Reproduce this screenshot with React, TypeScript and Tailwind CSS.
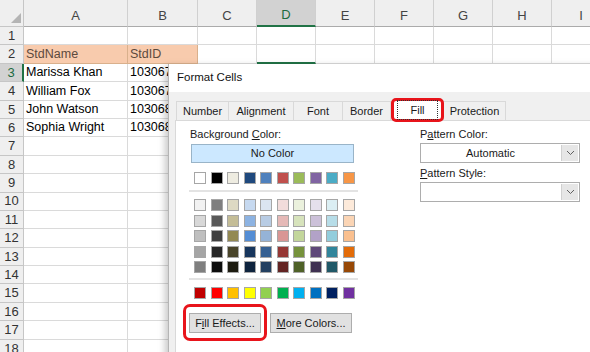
import React from "react";

const cols = [
  { k: "A", w: "w-[104px]" },
  { k: "B", w: "w-[70px]" },
  { k: "C", w: "w-[59px]" },
  { k: "D", w: "w-[59px]" },
  { k: "E", w: "w-[59px]" },
  { k: "F", w: "w-[59px]" },
  { k: "G", w: "w-[59px]" },
  { k: "H", w: "w-[59px]" },
  { k: "I", w: "w-[59px]" },
];

const data: Record<number, string[]> = {
  2: ["StdName", "StdID"],
  3: ["Marissa Khan", "10306712"],
  4: ["William Fox", "10306745"],
  5: ["John Watson", "10306803"],
  6: ["Sophia Wright", "10306867"],
};

const themeTop = ["#FFFFFF", "#000000", "#EEECE1", "#1F497D", "#4F81BD", "#C0504D", "#9BBB59", "#8064A2", "#4BACC6", "#F79646"];

const themeShades = [
  ["#F2F2F2", "#7F7F7F", "#DDD9C3", "#C6D9F0", "#DBE5F1", "#F2DCDB", "#EBF1DD", "#E5E0EC", "#DBEEF3", "#FDEADA"],
  ["#D8D8D8", "#595959", "#C4BD97", "#8DB3E2", "#B8CCE4", "#E5B9B7", "#D7E3BC", "#CCC1D9", "#B7DDE8", "#FBD5B5"],
  ["#BFBFBF", "#3F3F3F", "#938953", "#548DD4", "#95B3D7", "#D99694", "#C3D69B", "#B2A2C7", "#92CDDC", "#FAC08F"],
  ["#A5A5A5", "#262626", "#494429", "#17365D", "#366092", "#953734", "#76923C", "#5F497A", "#31859B", "#E36C09"],
  ["#7F7F7F", "#0C0C0C", "#1D1B10", "#0F243E", "#244061", "#632423", "#4F6128", "#3F3151", "#205867", "#974806"],
];

const standard = ["#C00000", "#FF0000", "#FFC000", "#FFFF00", "#92D050", "#00B050", "#00B0F0", "#0070C0", "#002060", "#7030A0"];

function Sheet() {
  const rows = Array.from({ length: 18 }, (_, i) => i + 1);
  return (
    <div className="flex flex-col">
      {/* column headers */}
      <div className="flex h-[27px] bg-[#efefef]">
        <div className="w-[24px] shrink-0 border-r border-b border-[#c6c6c6] flex items-end justify-end pr-[2px] pb-[3px]">
          <svg width="10" height="10" viewBox="0 0 10 10">
            <polygon points="10,0 10,10 0,10" fill="#b4b4b4" />
          </svg>
        </div>
        {cols.map((c) => (
          <div
            key={c.k}
            className={`${c.w} shrink-0 flex items-center justify-center pt-[5px] border-r border-[#d0d0d0] text-[13px] ${
              c.k === "D"
                ? "bg-[#d2d2d2] text-[#1d6b40] border-b-2 border-b-[#217346]"
                : "text-[#444] border-b border-b-[#ababab]"
            }`}
          >
            {c.k}
          </div>
        ))}
      </div>
      {rows.map((r) => (
        <div key={r} className="flex h-[18.4px]">
          <div
            className={`w-[24px] shrink-0 border-b border-[#c6c6c6] flex items-center justify-center text-[13px] ${
              r === 3
                ? "bg-[#d2d2d2] text-[#1d6b40] border-r-2 border-r-[#217346]"
                : "bg-[#efefef] text-[#333] border-r"
            }`}
          >
            {r}
          </div>
          {cols.map((c, ci) => {
            const text = data[r]?.[ci] ?? "";
            const filled = r === 2 && ci < 2;
            const sel = r === 2 && c.k === "D";
            return (
              <div
                key={c.k}
                className={`${c.w} shrink-0 border-r flex items-center pl-[2px] overflow-hidden whitespace-nowrap text-[12.5px] leading-none ${
                  filled ? "bg-[#f8cbad] text-[#5c4a3d] border-[#d9b08c] border-b" : "text-black border-[#dadada]"
                } ${sel ? "border-b-2 border-b-[#217346]" : filled ? "" : "border-b"}`}
              >
                {text}
              </div>
            );
          })}
        </div>
      ))}
    </div>
  );
}

function Swatch({ color }: { color: string }) {
  return <div className="w-[12px] h-[12px] border border-[#a6a6a6] shrink-0" style={{ backgroundColor: color }} />;
}

function SwatchRow({ colors }: { colors: string[] }) {
  return (
    <div className="flex gap-x-[4.55px] ml-[4px]">
      {colors.map((c, i) => (
        <Swatch key={i} color={c} />
      ))}
    </div>
  );
}

function Chevron() {
  return (
    <svg width="9" height="6" viewBox="0 0 9 6">
      <polyline points="1,1 4.5,4.5 8,1" fill="none" stroke="#606060" strokeWidth="1" />
    </svg>
  );
}

function Combo({ value }: { value: string }) {
  return (
    <div className="flex w-[160px] h-[20px] border border-[#adadad] bg-white">
      <div className="flex-1 flex items-center justify-center">{value}</div>
      <div className="w-[17px] m-[1px] bg-[#e6e6e6] border-l border-[#d0d0d0] flex items-center justify-center">
        <Chevron />
      </div>
    </div>
  );
}

function Tab({ label, w }: { label: string; w: string }) {
  return (
    <div className={`${w} h-[19px] flex items-center justify-center border border-b-0 border-[#d9d9d9] -ml-px first:ml-0 bg-[#f0f0f0]`}>
      {label}
    </div>
  );
}

function FormatCells() {
  return (
    <div className="absolute left-[168px] top-[64px] w-[440px] h-[300px] bg-[#f0f0f0] border-l border-[#b5b5b5] shadow-[-3px_2px_7px_rgba(0,0,0,0.22)] text-[11px] text-[#1a1a1a]">
      <div className="h-[28px] bg-white flex items-center pl-[8px] text-[11.5px] text-[#111]">Format Cells</div>
      <div className="pl-[6px] pt-[9px]">
        <div className="flex items-end h-[19px] pl-[1px]">
          <Tab label="Number" w="w-[53px]" />
          <Tab label="Alignment" w="w-[66px]" />
          <Tab label="Font" w="w-[50px]" />
          <Tab label="Border" w="w-[49px]" />
          <div className="relative z-10 w-[53px] h-[24px] -mb-[2px] border-[3px] border-[#e8141b] rounded-[5px] bg-white flex items-center justify-center">
            <span className="px-[12px] py-[1px] border border-dotted border-[#333]">Fill</span>
          </div>
          <Tab label="Protection" w="w-[63px]" />
        </div>
        <div className="flex h-[240px] border border-[#d9d9d9] bg-white">
          <div className="w-[244px] shrink-0 pl-[14px] pt-[6px] flex flex-col">
            <div className="h-[14px] leading-[14px]">
              Background <span className="underline">C</span>olor:
            </div>
            <div className="mt-[3px] ml-[1px] w-[163px] h-[19px] bg-[#cce8ff] border border-[#99b4c8] flex items-center justify-center">
              No Color
            </div>
            <div className="mt-[9px]">
              <SwatchRow colors={themeTop} />
            </div>
            <div className="mt-[6px] -ml-[1px] w-[169px] h-[2px] bg-[#e3e3e3]" />
            <div className="mt-[7px] flex flex-col gap-y-[3.5px]">
              {themeShades.map((row, i) => (
                <SwatchRow key={i} colors={row} />
              ))}
            </div>
            <div className="mt-[5px] -ml-[1px] w-[169px] h-[2px] bg-[#e3e3e3]" />
            <div className="mt-[7px]">
              <SwatchRow colors={standard} />
            </div>
            <div className="mt-[14px] -ml-[1px] flex gap-[9px]">
              <div className="relative">
                <div className="w-[72px] h-[20px] bg-[#e1e1e1] border border-[#adadad] flex items-center justify-center">
                  <span>
                    F<span className="underline">i</span>ll Effects...
                  </span>
                </div>
                <div className="absolute -left-[6px] -right-[6px] -top-[9px] -bottom-[8px] border-[3px] border-[#e8141b] rounded-[7px]" />
              </div>
              <div className="w-[82px] h-[20px] bg-[#e1e1e1] border border-[#adadad] flex items-center justify-center">
                <span>
                  <span className="underline">M</span>ore Colors...
                </span>
              </div>
            </div>
          </div>
          <div className="pt-[6px] flex flex-col">
            <div className="h-[14px] leading-[14px]">
              P<span className="underline">a</span>ttern Color:
            </div>
            <div className="mt-[2px]">
              <Combo value="Automatic" />
            </div>
            <div className="mt-[3px] h-[14px] leading-[14px]">
              <span className="underline">P</span>attern Style:
            </div>
            <div className="mt-[2px]">
              <Combo value="" />
            </div>
          </div>
        </div>
      </div>
    </div>
  );
}

export default function App() {
  return (
    <div className="relative w-[590px] h-[352px] overflow-hidden bg-white font-['Liberation_Sans',Arial,sans-serif]">
      <Sheet />
      <FormatCells />
    </div>
  );
}
